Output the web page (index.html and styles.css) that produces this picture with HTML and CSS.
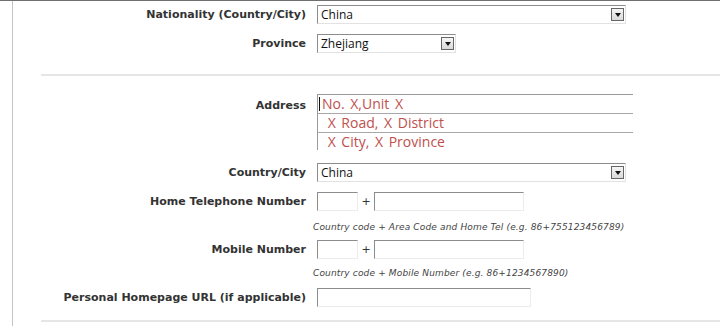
FILE: index.html
```html
<!DOCTYPE html>
<html>
<head>
<meta charset="utf-8">
<link rel="stylesheet" href="styles.css">
</head>
<body>
<div class="page">
  <div class="row r-nat">
    <div class="label">Nationality (Country/City)</div>
    <div class="field"><div class="select wide"><span class="val">China</span><span class="arrow"></span></div></div>
  </div>
  <div class="row r-prov">
    <div class="label">Province</div>
    <div class="field"><div class="select narrow"><span class="val">Zhejiang</span><span class="arrow"></span></div></div>
  </div>
  <div class="sep"></div>
  <div class="row r-addr">
    <div class="label">Address</div>
    <div class="field">
      <div class="addr">
        <div class="aline"><span class="caret"></span>No. X,Unit X</div>
        <div class="aline">&nbsp;X Road, X District</div>
        <div class="aline last">&nbsp;X City, X Province</div>
      </div>
    </div>
  </div>
  <div class="row r-country">
    <div class="label">Country/City</div>
    <div class="field"><div class="select wide"><span class="val">China</span><span class="arrow"></span></div></div>
  </div>
  <div class="row r-tel">
    <div class="label">Home Telephone Number</div>
    <div class="field phone"><span class="input code"></span><span class="plus">+</span><span class="input num"></span></div>
  </div>
  <div class="hint h1">Country code + Area Code and Home Tel (e.g. 86+755123456789)</div>
  <div class="row r-mob">
    <div class="label">Mobile Number</div>
    <div class="field phone"><span class="input code"></span><span class="plus">+</span><span class="input num"></span></div>
  </div>
  <div class="hint h2">Country code + Mobile Number (e.g. 86+1234567890)</div>
  <div class="row r-url">
    <div class="label">Personal Homepage URL (if applicable)</div>
    <div class="field"><span class="input url"></span></div>
  </div>
  <div class="sep bottom"></div>
</div>
</body>
</html>
```
FILE: styles.css
```css
html, body {
  margin: 0;
  padding: 0;
  background: #fff;
}
body {
  width: 720px;
  height: 326px;
  overflow: hidden;
  border-top: 1px solid #6f6f6f;
  box-sizing: border-box;
  font-family: "DejaVu Sans", Verdana, sans-serif;
}
.page {
  margin-left: 12px;
  border-left: 1px solid #c4c4c4;
  height: 325px;
  box-sizing: border-box;
  padding-top: 4px;
  overflow: hidden;
}
.row {
  display: grid;
  grid-template-columns: 293px 1fr;
  column-gap: 11px;
  align-items: center;
}
.label {
  text-align: right;
  font-weight: bold;
  font-size: 11px;
  color: #333;
}
.field {
  display: flex;
  align-items: center;
}
.select {
  height: 19px;
  box-sizing: border-box;
  border-top: 1px solid #8c8c8c;
  border-left: 1px solid #8c8c8c;
  border-right: 1px solid #e2e2e2;
  border-bottom: 1px solid #e2e2e2;
  display: flex;
  align-items: center;
  justify-content: space-between;
  padding: 0 1px 0 3px;
  font-family: "Open Sans", "DejaVu Sans", sans-serif;
  font-size: 12px;
  color: #111;
}
.select.wide { width: 309px; }
.select.narrow { width: 139px; }
.arrow {
  width: 13px;
  height: 13px;
  box-sizing: border-box;
  border: 1px solid #666;
  background: linear-gradient(#f6f6f6, #d9d9d9);
  position: relative;
}
.arrow::after {
  content: "";
  position: absolute;
  left: 3px;
  top: 4px;
  border-left: 3px solid transparent;
  border-right: 3px solid transparent;
  border-top: 4px solid #111;
}
.r-prov { margin-top: 10px; }
.sep {
  margin: 21px 0 0 28px;
  height: 2px;
  background: #e6e6e6;
}
.r-addr {
  margin-top: 18px;
  align-items: start;
}
.r-addr .label { padding-top: 5px; }
.addr {
  width: 315px;
  border-top: 1px solid #9a9a9a;
  border-left: 1px solid #9a9a9a;
  font-family: "Open Sans", "DejaVu Sans", sans-serif;
  font-size: 14px;
  word-spacing: 2px;
  color: #c0504d;
}
.aline {
  height: 18px;
  line-height: 18px;
  border-bottom: 1px solid #a8a8a8;
  padding-left: 4px;
  display: flex;
  align-items: center;
  white-space: pre;
}
.aline.last {
  border-bottom: none;
  height: 17px;
}
.caret {
  width: 1px;
  height: 14px;
  background: #111;
  margin: 0 2px 0 -3px;
}
.r-country { margin-top: 13px; }
.r-tel { margin-top: 10px; }
.r-mob { margin-top: 8px; }
.r-url { margin-top: 10px; }
.input {
  height: 19px;
  box-sizing: border-box;
  border-top: 1px solid #8c8c8c;
  border-left: 1px solid #8c8c8c;
  border-right: 1px solid #ececec;
  border-bottom: 1px solid #ececec;
  display: block;
}
.input.code { width: 41px; }
.input.num { width: 150px; }
.input.url { width: 214px; }
.plus {
  font-size: 11px;
  color: #333;
  width: 16px;
  text-align: center;
}
.hint {
  margin: 11px 0 0 300px;
  font-size: 9px;
  letter-spacing: 0.15px;
  font-style: italic;
  color: #444;
}
.hint.h2 { margin-top: 9px; }
.sep.bottom { margin-top: 13px; }
```
